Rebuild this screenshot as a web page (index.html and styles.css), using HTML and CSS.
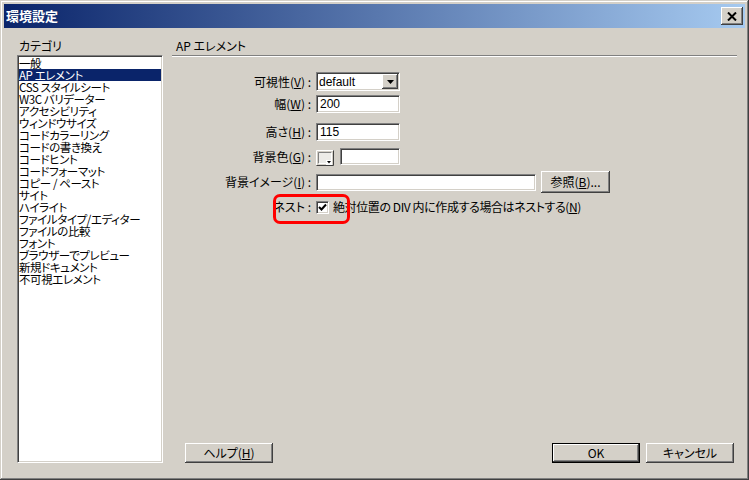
FILE: index.html
```html
<!DOCTYPE html>
<html lang="ja">
<head>
<meta charset="utf-8">
<title>環境設定</title>
<link rel="stylesheet" href="styles.css">
</head>
<body>
<div class="window">
  <div class="titlebar">
    <span class="title">環境設定</span>
    <button class="close" aria-label="閉じる">
      <svg width="10" height="9" viewBox="0 0 10 9"><path d="M1 0.5 L9 8.5 M9 0.5 L1 8.5" stroke="#000" stroke-width="2" fill="none"/></svg>
    </button>
  </div>
  <div class="client">
    <div class="left">
      <div class="cat-label">カテゴリ</div>
      <ul class="listbox">
        <li>一般</li>
        <li class="sel">AP エレメント</li>
        <li>CSS スタイルシート</li>
        <li>W3C バリデーター</li>
        <li>アクセシビリティ</li>
        <li>ウィンドウサイズ</li>
        <li>コードカラーリング</li>
        <li>コードの書き換え</li>
        <li>コードヒント</li>
        <li>コードフォーマット</li>
        <li>コピー / ペースト</li>
        <li>サイト</li>
        <li>ハイライト</li>
        <li>ファイルタイプ/エディター</li>
        <li>ファイルの比較</li>
        <li>フォント</li>
        <li>ブラウザーでプレビュー</li>
        <li>新規ドキュメント</li>
        <li>不可視エレメント</li>
      </ul>
    </div>
    <div class="right">
      <div class="section-head">AP エレメント</div>
      <div class="form">
        <div class="row r1">
          <span class="lbl">可視性(<u>V</u>) :</span>
          <div class="select"><span class="sel-text">default</span><span class="drop"><svg width="7" height="4" viewBox="0 0 7 4"><path d="M0 0 H7 L3.5 4 Z" fill="#000"/></svg></span></div>
        </div>
        <div class="row r2">
          <span class="lbl">幅(<u>W</u>) :</span>
          <input class="field w84" type="text" value="200">
        </div>
        <div class="row r3">
          <span class="lbl">高さ(<u>H</u>) :</span>
          <input class="field w84" type="text" value="115">
        </div>
        <div class="row r4">
          <span class="lbl">背景色(<u>G</u>) :</span>
          <span class="colorbtn"><svg width="18" height="16" viewBox="0 0 18 16"><rect x="0" y="0" width="18" height="16" fill="#d4d0c8"/><path d="M17.5 0.5 V15.5 H0.5" stroke="#404040" fill="none"/><path d="M0.5 15 V0.5 H17" stroke="#fff" fill="none"/><path d="M2.5 13.5 V2.5 H15.5" stroke="#808080" fill="none"/><rect x="3" y="3" width="12" height="10" fill="#ecebe8"/><path d="M15.5 2.5 V13.5 H2.5" stroke="#fff" fill="none"/><rect x="10" y="10" width="6" height="5" fill="#fff"/><path d="M11 11 H15 L13 13.5 Z" fill="#000"/></svg></span>
          <input class="field w60" type="text" value="">
        </div>
        <div class="row r5">
          <span class="lbl">背景イメージ(<u>I</u>) :</span>
          <input class="field w220" type="text" value="">
          <button class="btn browse">参照(<u>B</u>)...</button>
        </div>
        <div class="row r6">
          <span class="lbl">ネスト :</span>
          <span class="check"><svg width="9" height="9" viewBox="0 0 9 9"><path d="M1 4 L3.5 6.5 L8 1.5" stroke="#000" stroke-width="2" fill="none"/></svg></span>
          <span class="check-text">絶対位置の DIV 内に作成する場合はネストする(<u>N</u>)</span>
        </div>
      </div>
      <div class="buttons">
        <button class="btn">ヘルプ(<u>H</u>)</button>
        <span class="spacer"></span>
        <button class="btn default">OK</button>
        <button class="btn">キャンセル</button>
      </div>
    </div>
  </div>
  <div class="highlight"></div>
</div>
</body>
</html>
```
FILE: styles.css
```css
html, body {
  margin: 0;
  padding: 0;
}
body {
  background: #d4d0c8;
  font-family: "Noto Sans CJK JP", sans-serif;
  font-size: 12px;
  font-feature-settings: "palt";
  color: #000;
}
u { text-decoration: underline; text-underline-offset: 1px; }

.window {
  position: relative;
  width: 749px;
  height: 480px;
  box-sizing: border-box;
  padding: 4px;
  background: #d4d0c8;
  box-shadow: inset -1px -1px 0 #404040, inset 1px 1px 0 #d4d0c8,
              inset -2px -2px 0 #808080, inset 2px 2px 0 #fff;
  display: flex;
  flex-direction: column;
}

.titlebar {
  height: 24px;
  flex: none;
  background: linear-gradient(to right, #0a246a, #a6caf0);
  display: flex;
  align-items: center;
  justify-content: space-between;
  padding: 0 2px 0 2px;
}
.title {
  color: #fff;
  font-weight: bold;
  font-size: 13px;
  line-height: 14px;
  font-feature-settings: normal;
}
.close {
  width: 22px;
  height: 18px;
  padding: 0;
  border: none;
  background: #d4d0c8;
  box-shadow: inset -1px -1px 0 #404040, inset 1px 1px 0 #fff, inset -2px -2px 0 #808080;
  display: flex;
  align-items: center;
  justify-content: center;
}
.close svg { display: block; }

.client {
  flex: 1;
  display: flex;
  gap: 9px;
  padding: 12px 8px 13px 13px;
  min-height: 0;
}

.left {
  width: 146px;
  flex: none;
  display: flex;
  flex-direction: column;
}
.cat-label {
  height: 15px;
  line-height: 12px;
  padding-left: 2px;
}
.listbox {
  flex: 1;
  margin: 0;
  list-style: none;
  background: #fff;
  border: 1px solid;
  border-color: #808080 #fff #fff #808080;
  box-shadow: inset 1px 1px 0 #404040, inset -1px -1px 0 #d4d0c8;
  padding: 1px;
}
.listbox li {
  font-size: 11.5px;
  line-height: 12px;
  white-space: nowrap;
  letter-spacing: -0.4px;
}
.listbox li.sel {
  background: #0a246a;
  color: #fff;
}

.right {
  flex: 1;
  display: flex;
  flex-direction: column;
}
.section-head {
  height: 15px;
  line-height: 12px;
  padding-left: 4px;
  border-bottom: 1px solid #808080;
  box-shadow: 0 1px 0 #fff;
}

.form {
  margin-top: 16px;
  display: flex;
  flex-direction: column;
}
.row {
  display: flex;
  align-items: center;
}
.r1 { height: 19px; }
.r2 { height: 18px; margin-top: 4px; }
.r3 { height: 18px; margin-top: 10px; }
.r4 { height: 18px; margin-top: 7px; }
.r5 { height: 22px; margin-top: 5px; }
.r6 { height: 16px; margin-top: 6px; }

.lbl {
  width: 139px;
  padding-right: 5px;
  text-align: right;
  white-space: nowrap;
  line-height: 12px;
}

.select {
  width: 84px;
  height: 19px;
  box-sizing: border-box;
  background: #fff;
  border: 1px solid;
  border-color: #808080 #fff #fff #808080;
  box-shadow: inset 1px 1px 0 #404040, inset -1px -1px 0 #d4d0c8;
  display: flex;
  align-items: center;
  justify-content: space-between;
  padding: 1px 1px 1px 2px;
}
.sel-text { line-height: 12px; font-family: "Liberation Sans", "Noto Sans CJK JP", sans-serif; }
.drop {
  width: 16px;
  height: 15px;
  box-sizing: border-box;
  background: #d4d0c8;
  box-shadow: inset -1px -1px 0 #404040, inset 1px 1px 0 #fff, inset -2px -2px 0 #808080;
  display: flex;
  align-items: center;
  justify-content: center;
}
.drop svg { display: block; }

.field {
  height: 18px;
  box-sizing: border-box;
  margin: 0;
  background: #fff;
  border: 1px solid;
  border-color: #808080 #fff #fff #808080;
  box-shadow: inset 1px 1px 0 #404040, inset -1px -1px 0 #d4d0c8;
  padding: 0 3px;
  font: inherit;
  font-family: "Liberation Sans", "Noto Sans CJK JP", sans-serif;
  font-size: 12px;
  outline: none;
}
.w84 { width: 84px; }
.w60 { width: 60px; height: 17px; align-self: flex-start; }
.w220 { width: 220px; height: 17px; }

.colorbtn {
  width: 18px;
  height: 16px;
  margin-right: 6px;
  align-self: flex-end;
}
.colorbtn svg { display: block; }

.btn {
  height: 20px;
  width: 88px;
  box-sizing: border-box;
  padding: 0;
  border: none;
  background: #d4d0c8;
  box-shadow: inset -1px -1px 0 #404040, inset 1px 1px 0 #fff, inset -2px -2px 0 #808080;
  font: inherit;
  font-size: 12px;
  line-height: 12px;
  color: #000;
}
.browse {
  width: 69px;
  height: 22px;
  margin-left: 5px;
}
.btn.default {
  border: 1px solid #000;
}

.check {
  width: 13px;
  height: 13px;
  box-sizing: border-box;
  background: #fff;
  border: 1px solid;
  border-color: #808080 #fff #fff #808080;
  box-shadow: inset 1px 1px 0 #404040, inset -1px -1px 0 #d4d0c8;
  display: flex;
  align-items: center;
  justify-content: center;
}
.check svg { display: block; }
.check-text {
  margin-left: 4px;
  line-height: 12px;
  white-space: nowrap;
  letter-spacing: -0.4px;
}

.buttons {
  margin-top: auto;
  display: flex;
  gap: 6px;
  padding: 0 3px 0 13px;
}
.spacer { flex: 1; }

.highlight {
  position: absolute;
  left: 273px;
  top: 194px;
  width: 77px;
  height: 30px;
  box-sizing: border-box;
  border: 3px solid #ff0000;
  border-radius: 7px;
}
```
